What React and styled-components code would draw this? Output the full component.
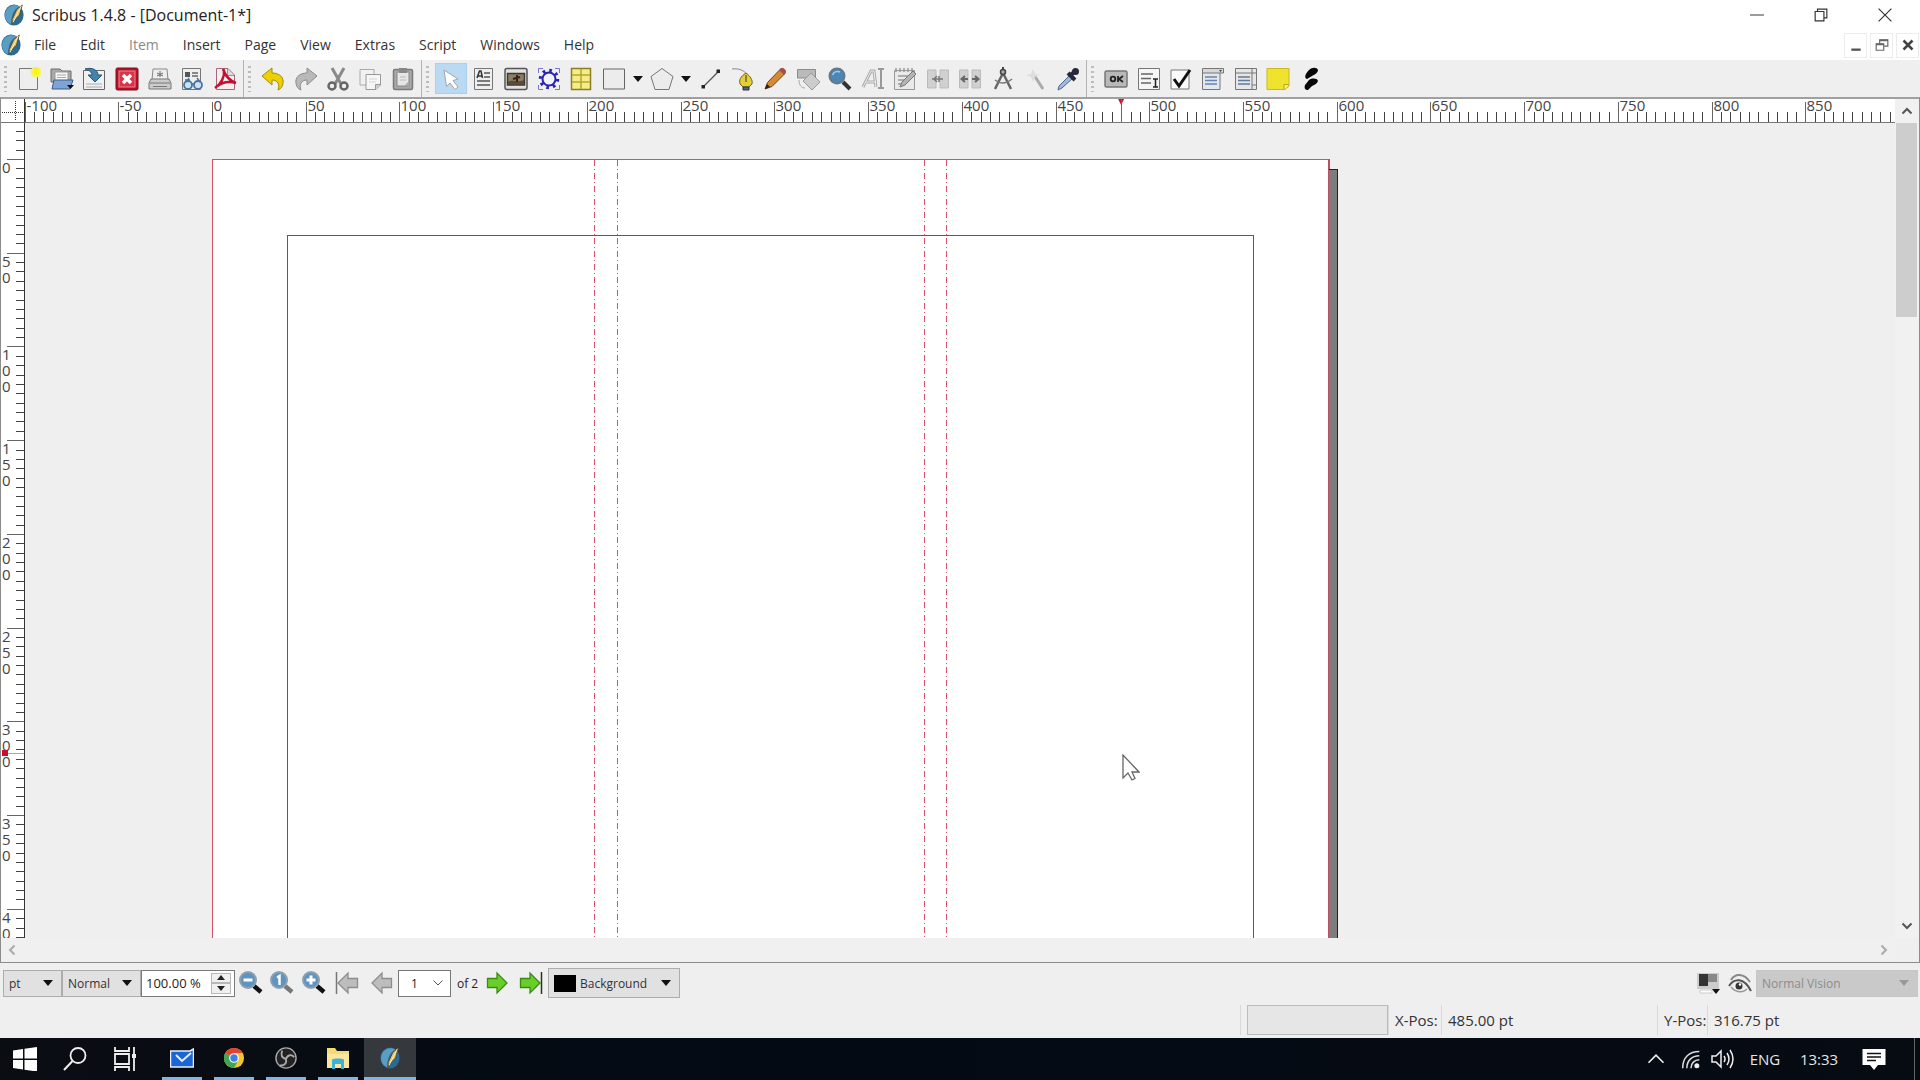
import React, { useState } from 'react';
import styled, { createGlobalStyle, css } from 'styled-components';

const GlobalStyle = createGlobalStyle`
  * {
    box-sizing: border-box;
  }

  body {
    margin: 0;
    overflow: hidden;
    background: #efefef;
    color: #222;
    font-family: 'Open Sans', 'Noto Sans', sans-serif;
    font-size: 14px;
  }

  button,
  input,
  select {
    margin: 0;
    padding: 0;
    border: 0;
    background: none;
    color: inherit;
    font: inherit;
  }
`;

const PX_PER_PT = 1.8745;
const H_ORIGIN = 187;
const V_ORIGIN = 36;
const CURSOR = { x: 485, y: 316.75 };

/* ---------- window chrome ---------- */

const Window = styled.div`
  display: flex;
  flex-direction: column;
  height: 100vh;
`;

const TitleBar = styled.header`
  display: flex;
  align-items: center;
  flex: none;
  height: 30px;
  padding-left: 3px;
  background: #fff;
`;

const Title = styled.h1`
  flex: 1;
  margin: 0 0 0 7px;
  font-size: 16px;
  font-weight: 400;
  line-height: 20px;
`;

const WindowButton = styled.button`
  display: grid;
  place-items: center;
  width: 64px;
  height: 28px;
`;

const WindowButtons = styled.div`
  display: flex;
  padding-right: 3px;
`;

const MenuBar = styled.nav`
  display: flex;
  align-items: center;
  flex: none;
  height: 30px;
  background: #fff;
`;

const MenuItem = styled.button`
  height: 30px;
  padding: 0 12px;
  color: ${props => (props.disabled ? '#8a8a8a' : '#333')};
  line-height: 20px;
`;

const MdiButtons = styled.div`
  display: flex;
  gap: 3px;
  margin-left: auto;
  padding-right: 1px;
`;

const MdiButton = styled.button`
  display: grid;
  place-items: center;
  width: 23px;
  height: 25px;
  border: 1px solid #ececec;
`;

/* ---------- main toolbar ---------- */

const Toolbar = styled.div`
  display: flex;
  flex: none;
  height: 37px;
  background: #efefef;
`;

const ToolSection = styled.div`
  display: flex;
  align-items: center;
  padding: 0 2px 0 4px;
  border-right: ${props => (props.$last ? '0' : '1px solid #b4b4b4')};
`;

const Handle = styled.span`
  flex: none;
  width: 4px;
  height: 26px;
  margin-right: 5px;
  background: repeating-linear-gradient(#bcbcbc 0 2px, transparent 2px 5px);
  background-size: 3px 100%;
  background-repeat: no-repeat;
`;

const ToolGroup = styled.div`
  display: flex;
  width: ${props => props.$width}px;
`;

const ToolButton = styled.button`
  display: grid;
  flex: 1;
  place-items: center;
  height: 31px;
  ${props => props.$active && css`
    background: #b9daf2;
    box-shadow: inset 0 0 0 1px #a8d0ee;
  `}
`;

const ArrowButton = styled.button`
  display: grid;
  place-items: center;
  width: 16px;
  height: 31px;
`;

/* ---------- workspace ---------- */

const Workspace = styled.main`
  display: grid;
  grid-template-columns: 24px minmax(0, 1fr) 24px;
  grid-template-rows: 24px minmax(0, 1fr) 24px;
  flex: 1;
  min-height: 0;
  border: 1px solid #8c8c8c;
  border-top: 2px solid #a0a0a0;
`;

const RulerCorner = styled.div`
  display: grid;
  place-items: center;
  border-right: 1px solid #333;
  border-bottom: 1px solid #777;
  background: #fff;
`;

const HRuler = styled.svg`
  display: block;
  width: 100%;
  height: 24px;
  border-bottom: 1px solid #777;
  background: #fff;
`;

const VRuler = styled.svg`
  display: block;
  width: 24px;
  height: 100%;
  border-right: 1px solid #333;
  background: #fff;
`;

const RulerText = styled.text`
  fill: #444;
  font-size: 15px;
`;

const Canvas = styled.div`
  overflow: hidden;
  padding: 36px 0 0 187px;
  background: #efefef;
`;

const Sheet = styled.div`
  position: relative;
  width: 1118px;
  height: 1580px;
  padding: 75px 74px;
  border: 1px solid #d4526b;
  border-right: 2px solid #b8505f;
  background: #fff;

  &::after {
    content: '';
    position: absolute;
    top: 9px;
    right: -10px;
    width: 8px;
    height: 100%;
    border: 1px solid #222;
    border-left: 0;
    background: #7d7d7d;
  }
`;

const Margins = styled.div`
  height: 100%;
  border: 1px solid #5a4bb8;
`;

const Guide = styled.span`
  position: absolute;
  top: 0;
  bottom: 0;
  width: 1px;
  background: repeating-linear-gradient(
    #d4526b 0 6px,
    transparent 6px 9px,
    #d4526b 9px 10px,
    transparent 10px 13px
  );
`;

const Pointer = styled.svg`
  position: absolute;
  width: 18px;
  height: 28px;
`;

const VScroll = styled.div`
  display: flex;
  flex-direction: column;
  align-items: center;
  grid-row: 1 / 3;
  grid-column: 3;
  padding: 0 2px 0 1px;
  background: #f1f1f1;
`;

const ScrollButton = styled.button`
  display: grid;
  flex: none;
  place-items: center;
  width: 22px;
  height: 24px;
`;

const Track = styled.div`
  flex: 1;
  width: 100%;
`;

const Thumb = styled.div`
  height: 24.5%;
  background: #cdcdcd;
`;

const HScroll = styled.div`
  display: flex;
  justify-content: space-between;
  grid-column: 1 / 3;
  background: #f0f0f0;
`;

/* ---------- bottom bars ---------- */

const ViewBar = styled.div`
  display: flex;
  align-items: center;
  flex: none;
  height: 41px;
  padding: 0 2px 1px 3px;
  font-size: 12px;
`;

const Picker = styled.label`
  position: relative;
  display: flex;
  align-items: center;
  gap: 4px;
  width: ${props => props.$width}px;
  height: ${props => (props.$tall ? 30 : 27)}px;
  padding-left: 5px;
  border: 1px solid #adadad;
  background: #e1e1e1;
  color: #333;
  ${props => props.$off && css`
    border-color: #c6c6c6;
    background: #c9c9c9;
    color: #8c8c8c;
  `}

  &::after {
    content: '';
    position: absolute;
    right: 8px;
    border: 5px solid transparent;
    border-top: 6px solid ${props => (props.$off ? '#999' : '#111')};
    border-bottom: 0;
    pointer-events: none;
  }

  select {
    flex: 1;
    width: 0;
    height: 100%;
    opacity: 1;
    appearance: none;
    outline: 0;
  }
`;

const Swatch = styled.span`
  width: 22px;
  height: 17px;
  background: #000;
`;

const Spin = styled.div`
  display: flex;
  width: 94px;
  height: 27px;
  padding: 2px 3px 2px 4px;
  border: 1px solid #7a7a7a;
  background: #fff;
  font-size: 13px;

  input {
    flex: 1;
    width: 0;
    outline: 0;
  }
`;

const SpinSteps = styled.div`
  display: flex;
  flex-direction: column;
  width: 20px;

  button {
    display: grid;
    flex: 1;
    place-items: center;
    border: 1px solid #b8b8b8;
    background: #f0f0f0;
  }
`;

const IconRow = styled.div`
  display: flex;
  justify-content: space-around;
  width: ${props => props.$width}px;
`;

const IconButton = styled.button`
  display: grid;
  place-items: center;
  width: 26px;
  height: 27px;
`;

const PagePicker = styled.label`
  display: flex;
  align-items: center;
  width: 53px;
  height: 27px;
  padding: 0 6px 0 12px;
  border: 1px solid #777;
  background: #fff;

  select {
    flex: 1;
    width: 0;
    height: 100%;
    appearance: none;
    outline: 0;
  }
`;

const PageCount = styled.span`
  width: 30px;
  padding-left: 6px;
  white-space: nowrap;
`;

const Spacer = styled.div`
  flex: 1;
`;

const StatusBar = styled.footer`
  display: flex;
  justify-content: flex-end;
  flex: none;
  height: 34px;
  padding: 1px 2px 3px;
  color: #333;
  font-size: 15px;
  line-height: 30px;
`;

const StatusCell = styled.div`
  width: ${props => props.$width}px;
  padding-left: 6px;
  border-left: 1px solid #d9d9d9;
  white-space: nowrap;
`;

const Progress = styled.div`
  width: 141px;
  height: 30px;
  border: 1px solid #bcbcbc;
  background: #e6e6e6;
`;

/* ---------- taskbar ---------- */

const Taskbar = styled.div`
  display: flex;
  flex: none;
  height: 42px;
  background: linear-gradient(90deg, #0a0d12, #030a14 40%, #070b12);
  color: #e6e6e6;
  font-size: 15px;
`;

const SystemButtons = styled.div`
  display: flex;
  padding-right: 6px;
`;

const SystemButton = styled.button`
  display: grid;
  place-items: center;
  width: 50px;
`;

const TaskButton = styled.button`
  display: grid;
  place-items: center;
  width: 52px;
  background: ${props => (props.$active ? '#35393d' : 'none')};
  border-bottom: 3px solid #76b9ed;
  ${props => !props.$active && css`
    width: 40px;
    margin: 0 6px;
  `}
`;

const Tray = styled.div`
  display: flex;
  align-items: center;
  margin: 0 12px 0 auto;
`;

const TrayButton = styled.button`
  display: grid;
  place-items: center;
  width: ${props => props.$width}px;
  height: 42px;
`;

const ShowDesktop = styled.button`
  width: 6px;
  height: 42px;
  border-left: 1px solid #666;
`;

/* ---------- icons ---------- */

const Svg = ({ size = 24, children, ...rest }) => (
  <svg width={size} height={size} viewBox="0 0 24 24" fill="none" aria-hidden="true" {...rest}>
    {children}
  </svg>
);

const ScribusLogo = ({ size = 22 }) => (
  <Svg size={size}>
    <ellipse cx="12" cy="12" rx="10.5" ry="11.5" fill="#2b6a93" />
    <path d="M3 8C6 1 14 0 18 3 12 5 9 12 9 22 3 20 1 14 3 8Z" fill="#5b9ec4" />
    <path d="M21 1 15 6 10 17 10 22 12 18 18 12Z" fill="#e3c46a" stroke="#4f4a35" />
    <path d="M20 2 11 20" stroke="#faf0cc" />
  </Svg>
);

const Down = () => (
  <svg width="10" height="6" aria-hidden="true">
    <path d="M0 0H10L5 6Z" fill="#111" />
  </svg>
);

const page = <path d="M2.500 1.500H20.500V22.500H2.500Z" fill="#eee" stroke="#777" />;

const icons = {
  'New': (
    <>
      {page}
      <circle cx="19" cy="5" r="5.500" fill="#f6f35a" opacity=".9" />
      <circle cx="19" cy="5" r="3" fill="#fbf700" />
    </>
  ),
  'Open': (
    <>
      <path d="M1 2H10L12 4H21V15H1Z" fill="#a9a9a9" stroke="#6d6d6d" />
      <path d="M5 5H18V14H5Z" fill="#f5f5f5" stroke="#999" />
      <path d="M7 8H16M7 10.500H16" stroke="#aaa" />
      <path d="M4 13H23L20 22H2Z" fill="#7fa4d3" stroke="#365e92" />
      <path d="M17 18H24L20.500 22Z" fill="#111" />
    </>
  ),
  'Save': (
    <>
      <path d="M1.500 3.500H22.500V22.500H1.500Z" fill="#f1f1f1" stroke="#666" />
      <path d="M4 17H20M4 20H20" stroke="#aaa" />
      <path d="M3 2C10 0 16 3 16 8H20L13 15 6 8H10C10 5 7 3 3 2Z" fill="#4583ad" stroke="#235779" />
    </>
  ),
  'Close': (
    <>
      <rect x="1" y="1" width="22" height="22" rx="1.500" fill="#b50f27" stroke="#7d1020" />
      <rect x="4" y="4" width="16" height="16" fill="#de3246" stroke="#e98b95" />
      <path d="m8 8 8 8m0-8-8 8" stroke="#fff" strokeWidth="3.500" />
    </>
  ),
  'Print': (
    <>
      <path d="M5 2H19L20 13H4Z" fill="#eee" stroke="#888" />
      <path d="M12 4V10M9 6l6 3m0-3-6 3" stroke="#666" />
      <path d="M3 12H21L23 16V22H1V16Z" fill="#ccc" stroke="#777" />
      <path d="M2 16H22M5 19.500H19" stroke="#777" />
    </>
  ),
  'Preflight': (
    <>
      {page}
      <path d="M5 5H10V10H5Z" fill="#555" />
      <path d="M12 6H18M12 9H18M5 13H10" stroke="#666" strokeWidth="1.500" />
      <circle cx="8" cy="18" r="4" fill="#cfe0ef" stroke="#4675a5" strokeWidth="1.800" />
      <circle cx="18" cy="18" r="4" fill="#cfe0ef" stroke="#4675a5" strokeWidth="1.800" />
      <path d="m6 15 3-4M20 15l-3-4M12 17h2" stroke="#4675a5" strokeWidth="1.500" />
    </>
  ),
  'Export as PDF': (
    <>
      <path d="M3.500 1.500H15L21.500 8V22.500H3.500Z" fill="#f5edee" stroke="#a8657a" />
      <path d="M14.500 2V8.500H21" fill="#ddd" stroke="#b08a92" />
      <path d="M10 2C12 8 15 13 23 16M11 3C12 10 8 17 2 21M3 20C9 15 16 14 23 16" stroke="#c01130" strokeWidth="2.500" />
    </>
  ),
  'Undo': <path d="M1 9 11 1V6C19 6 23 11 22 16 22 19 20 22 17 23 19 18 17 13 11 13V18Z" fill="#ecd000" stroke="#a08c10" />,
  'Redo': <path d="M23 9 13 1V6C5 6 1 11 2 16 2 19 4 22 7 23 5 18 7 13 13 13V18Z" fill="#b9b9b9" stroke="#8c8c8c" />,
  'Cut': (
    <>
      <path d="M6 1 15 17M18 1 9 17" stroke="#8a8a8a" strokeWidth="3" />
      <circle cx="6" cy="19" r="3.500" stroke="#666" strokeWidth="2.500" />
      <circle cx="18" cy="19" r="3.500" stroke="#666" strokeWidth="2.500" />
    </>
  ),
  'Copy': (
    <>
      <path d="M2 2.500H16V18H2Z" fill="#f1f1f1" stroke="#aaa" />
      <path d="M8 7.500H22.500V18L18 22.500H8Z" fill="#f6f6f6" stroke="#999" />
      <path d="M22 17.500H17.500V22" fill="#ccc" stroke="#999" />
      <path d="M11 12H19M11 15H18" stroke="#d6d6d6" />
    </>
  ),
  'Paste': (
    <>
      <rect x="2.500" y="2.500" width="19" height="20" rx="1.500" fill="#a8a8a8" stroke="#7a7a7a" strokeWidth="1.500" />
      <path d="M6 5H18V19H6Z" fill="#e6e6e6" stroke="#888" />
      <path d="M8 1H16V6H8Z" fill="#888" />
      <path d="M9 10H15M9 13H15" stroke="#bbb" />
      <path d="m13 19 5-5v5Z" fill="#aaa" />
    </>
  ),
  'Select Item': <path d="M5 3 19 12 14 13.500 19 20 16 22.500 11 16 7.500 19.500Z" fill="#fff" stroke="#a4a4ac" />,
  'Insert Text Frame': (
    <>
      {page}
      <path d="M5 11 7.500 4H9l1.500 7M6 9h4" stroke="#333" strokeWidth="1.500" />
      <path d="M12 6H18M12 10H18M5 14H18M5 18H18" stroke="#555" strokeWidth="1.500" />
    </>
  ),
  'Insert Image Frame': (
    <>
      <rect x="1" y="1.500" width="22" height="21" rx="2" fill="#e2e2e2" stroke="#555" strokeWidth="1.500" />
      <path d="M3.500 6.500H20.500V18H3.500Z" fill="#8c7d63" stroke="#3d3931" strokeWidth="1.500" />
      <path d="M4 15C8 12 14 16 20 13V17.500H4Z" fill="#594b3a" />
      <path d="M13 8V15M9 12 16 10" stroke="#382218" strokeWidth="2" />
    </>
  ),
  'Insert Render Frame': (
    <>
      <path d="M1.500 6V1.500H6M18 1.500H22.500V6M22.500 18V22.500H18M6 22.500H1.500V18" stroke="#7a75cc" />
      <circle cx="12" cy="12" r="8.500" stroke="#2a22b4" strokeWidth="3.500" strokeDasharray="2.600 4.075" />
      <circle cx="12" cy="12" r="6.500" fill="#f3f3fc" stroke="#2a22b4" strokeWidth="2" />
    </>
  ),
  'Insert Table': (
    <>
      <path d="M2.500 1.500H21.500V22.500H2.500Z" fill="#f5ee86" stroke="#8d7d28" strokeWidth="1.500" />
      <path d="M12 2V22M3 8H21M3 15H21" stroke="#b6a534" strokeWidth="1.500" />
    </>
  ),
  'Insert Shape': <path d="M1.500 2H22.500V22H1.500Z" fill="#ececec" stroke="#666" />,
  'Insert Polygon': <path d="M12 1.500 23 9.500 19 22.500H5L1 9.500Z" fill="#ececec" stroke="#777" />,
  'Insert Line': (
    <>
      <path d="M4 20 20 4" stroke="#555" strokeWidth="1.300" />
      <path d="M2.500 18H6V21.500H2.500ZM17.500 2.500H21V6H17.500Z" fill="#222" />
    </>
  ),
  'Insert Bezier Curve': (
    <>
      <path d="M1 2C9 1 15 4 17 10" stroke="#888" />
      <path d="M15 6C9 10 8 13 9 17L12 20H18L21 17C22 13 19 9 15 6Z" fill="#e5cf37" stroke="#6b6120" />
      <path d="M15 8V15M12 20H18V23H12Z" fill="#4b6694" stroke="#333" />
    </>
  ),
  'Insert Freehand Line': (
    <>
      <path d="M2 22 4.500 15.500 17 2.500C20 0 24 4 21.500 7L9 19.500Z" fill="#d58a36" stroke="#6d4520" />
      <path d="m16 3 5 5 1.500-2C24 3 20 0 17.500 1.500Z" fill="#a85048" />
      <path d="m2 22 2-5 3 3Z" fill="#222" />
    </>
  ),
  'Rotate Item': (
    <>
      <path d="M1.500 2.500H19.500V11H1.500Z" fill="#bababa" stroke="#8b8b8b" />
      <path d="M15 6 24 15 16 23 7 14Z" fill="#ccc" stroke="#999" />
      <path d="M3 13C3 19 6 21 9 21" stroke="#aaa" />
    </>
  ),
  'Zoom': (
    <>
      <path d="m15 15 7 7" stroke="#333" strokeWidth="4" />
      <circle cx="9" cy="9" r="7.500" fill="#4a87b8" stroke="#6b7782" strokeWidth="2" />
      <path d="M4.500 8C6 4 10 4 12 5" stroke="#a8cbe6" strokeWidth="1.500" />
    </>
  ),
  'Edit Contents of Frame': (
    <>
      <path d="m2 20 8-16h3l2 16M5 15h9" stroke="#aaa" strokeWidth="3" />
      <path d="m2 20 8-16h3l2 16M5 15h9" stroke="#eee" />
      <path d="M17 2H23M20 2V21M17 21H23" stroke="#999" strokeWidth="2" />
    </>
  ),
  'Edit Text': (
    <>
      <path d="M1.500 3.500H21.500V22.500H1.500Z" fill="#e9e9e9" stroke="#999" />
      <path d="M3 1V5M7 1V5M11 1V5M15 1V5M19 1V5M5 9H15M5 13H12M5 17H9" stroke="#999" strokeWidth="1.500" />
      <path d="m7 20 2-5L20 4l3 3L12 18Z" fill="#b4b4b4" stroke="#777" />
    </>
  ),
  'Link Text Frames': (
    <>
      <path d="M1.500 3H10V21H1.500ZM14 3H22.500V21H14Z" fill="#d0d0d0" stroke="#bbb" />
      <path d="M6 12H17M11 9l-3 3 3 3M13 9V15" stroke="#777" strokeWidth="1.500" />
    </>
  ),
  'Unlink Text Frames': (
    <>
      <path d="M1.500 3H10V21H1.500ZM14 3H22.500V21H14Z" fill="#d0d0d0" stroke="#bbb" />
      <path d="M3 12H10M14 12H21M7 9l-3.500 3 3.500 3M17 9l3.500 3-3.500 3" stroke="#666" strokeWidth="2" />
    </>
  ),
  'Measurements': (
    <>
      <path d="M12 6 4 22M12 6 20 22" stroke="#666" strokeWidth="2.500" />
      <path d="M4 13C9 17 15 17 21 12" stroke="#777" strokeWidth="1.500" />
      <circle cx="12" cy="5" r="2.500" fill="#aaa" stroke="#444" strokeWidth="1.500" />
      <path d="M12 0V3" stroke="#444" strokeWidth="2" />
    </>
  ),
  'Copy Item Properties': (
    <>
      <path d="m11 8 9 14" stroke="#aaa" strokeWidth="3" />
      <path d="M10 2 12 7 17 8 12 10 10 15 8 10 3 8 8 7Z" fill="#ddd" />
    </>
  ),
  'Eye Dropper': (
    <>
      <path d="m14 8 3 3L6 21 2 23 3 19Z" fill="#9fb9dc" stroke="#50698c" />
      <path d="m12 6 7 7M15 8l5-5" stroke="#272a38" strokeWidth="4" />
      <circle cx="19.500" cy="4.500" r="3.500" fill="#272a38" />
    </>
  ),
  'Insert PDF Push Button': (
    <>
      <rect x="1" y="4" width="22" height="16" rx="1.500" fill="#b8b8b8" stroke="#777" strokeWidth="1.500" />
      <circle cx="9" cy="12" r="2.300" stroke="#222" strokeWidth="1.800" />
      <path d="M14 9V15M19 9l-4 3 4 3" stroke="#222" strokeWidth="1.800" />
    </>
  ),
  'Insert PDF Text Field': (
    <>
      <path d="M1.500 1.500H22.500V22.500H1.500Z" fill="#f5f5f5" stroke="#777" />
      <path d="M4 7H16M4 11.500H14M4 16H14" stroke="#666" strokeWidth="1.500" />
      <path d="M16 12H21M18.500 12V20M16 20H21" stroke="#222" strokeWidth="1.500" />
    </>
  ),
  'Insert PDF Check Box': (
    <>
      <path d="M2 3H20V22H2Z" fill="#fafafa" stroke="#777" />
      <path d="M5 12 10 19 21 3" stroke="#111" strokeWidth="3" />
    </>
  ),
  'Insert PDF Combo Box': (
    <>
      <path d="M1.500 4.500H19V22.500H1.500Z" fill="#e2e7ee" stroke="#777" />
      <path d="M1.500 1.500H22.500V6H1.500Z" fill="#d7d7d7" stroke="#777" />
      <path d="M4 10H16M4 13.500H16M4 17H16" stroke="#6684ad" strokeWidth="1.700" />
      <path d="m18 3 3 0-1.500 2Z" fill="#444" />
    </>
  ),
  'Insert PDF List Box': (
    <>
      <path d="M1.500 1.500H22.500V22.500H1.500Z" fill="#e6e6e6" stroke="#777" />
      <path d="M18 2V22M18 6H22M18 18H22M2 6H18" stroke="#777" />
      <path d="M4 10H16M4 13.500H16M4 17H16" stroke="#60799c" strokeWidth="1.700" />
    </>
  ),
  'Insert Text Annotation': (
    <>
      <path d="M1 1.500H23V19L19 22.500H1Z" fill="#efe32d" stroke="#c8b91c" />
      <path d="M23 17.500H18V22.500" fill="#f7f08a" stroke="#b3a41c" />
    </>
  ),
  'Insert Link Annotation': (
    <>
      <path d="M10 3C13 0 18 0 19 3 19 6 15 8 13 9L8 12C5 11 6 7 10 3Z" fill="#080808" />
      <path d="M10 13C13 11 18 11 19 14 18 17 15 18 13 19L9 23C6 23 5 21 6 18Z" fill="#080808" />
    </>
  ),
};

const TOOL_SECTIONS = [
  { width: 228, tools: ['New', 'Open', 'Save', 'Close', 'Print', 'Preflight', 'Export as PDF'] },
  { width: 162, tools: ['Undo', 'Redo', 'Cut', 'Copy', 'Paste'] },
  {
    width: 649,
    tools: [
      'Select Item', 'Insert Text Frame', 'Insert Image Frame', 'Insert Render Frame',
      'Insert Table', 'Insert Shape', 'Insert Polygon', 'Insert Line', 'Insert Bezier Curve',
      'Insert Freehand Line', 'Rotate Item', 'Zoom', 'Edit Contents of Frame', 'Edit Text',
      'Link Text Frames', 'Unlink Text Frames', 'Measurements', 'Copy Item Properties',
      'Eye Dropper',
    ],
  },
  {
    width: 227,
    tools: [
      'Insert PDF Push Button', 'Insert PDF Text Field', 'Insert PDF Check Box',
      'Insert PDF Combo Box', 'Insert PDF List Box', 'Insert Text Annotation',
      'Insert Link Annotation',
    ],
  },
];

const WITH_MENU = ['Insert Shape', 'Insert Polygon'];

const MENUS = ['File', 'Edit', 'Item', 'Insert', 'Page', 'View', 'Extras', 'Script', 'Windows', 'Help'];

const Magnifier = ({ handle = '#111', children }) => (
  <Svg>
    <path d="m15 15 7 6" stroke={handle} strokeWidth="4.500" />
    <circle cx="9" cy="9" r="8" fill="#5f93c2" stroke="#8fa0ad" strokeWidth="2" />
    {children}
  </Svg>
);

const PageArrow = ({ back, end, colors }) => (
  <Svg transform={back ? 'scale(-1 1)' : undefined}>
    <path d="M1.500 7.500H11V2L21 12 11 22V16.500H1.500Z" fill={colors[0]} stroke={colors[1]} strokeWidth="1.300" />
    {end && <path d="M22.500 1V23" stroke={colors[2]} strokeWidth="1.500" />}
  </Svg>
);

const GREY = ['#bdbdbd', '#8d8d8d', '#777'];
const GREEN = ['#68cf28', '#3c8a16', '#1d3a10'];

const Chevron = ({ d, color = '#555', width = 2 }) => (
  <Svg size={12}>
    <path d={d} stroke={color} strokeWidth={width * 2} />
  </Svg>
);

/* ---------- rulers ---------- */

const range = (from, to) => {
  const list = [];
  for (let pt = from; pt <= to; pt += 5) list.push(pt);
  return list;
};

const HorizontalRuler = () => (
  <HRuler>
    {range(-95, 895).concat(-100).map((pt) => {
      const x = Math.round(H_ORIGIN + pt * PX_PER_PT) + 0.5;
      const major = pt % 50 === 0;
      return (
        <g key={pt}>
          <path d={`M${x} ${major ? 3 : 13}V23`} stroke={major ? '#666' : '#444'} />
          {major && <RulerText x={x + 1} y="12">{pt}</RulerText>}
        </g>
      );
    })}
    <path
      d={`M${H_ORIGIN + CURSOR.x * PX_PER_PT - 3} 0h6l-3 6Z`}
      fill="#c8102e"
    />
    <path d={`M${Math.round(H_ORIGIN + CURSOR.x * PX_PER_PT) + 0.5} 0V23`} stroke="#d9304c" />
  </HRuler>
);

const VerticalRuler = () => (
  <VRuler>
    {range(-15, 600).map((pt) => {
      const y = Math.round(V_ORIGIN + pt * PX_PER_PT) + 0.5;
      const major = pt % 50 === 0;
      return (
        <g key={pt}>
          <path d={`M${major ? 6 : 15} ${y}H23`} stroke={major ? '#666' : '#444'} />
          {major && String(pt).split('').map((digit, i) => (
            <RulerText key={i} x="1" y={y + 13 + i * 16}>{digit}</RulerText>
          ))}
        </g>
      );
    })}
    <path d={`M5 ${Math.round(V_ORIGIN + CURSOR.y * PX_PER_PT) + 0.5}H23`} stroke="#ef8a9c" />
    <rect x="1" y={Math.round(V_ORIGIN + CURSOR.y * PX_PER_PT) - 3} width="6" height="6" fill="#c8102e" />
  </VRuler>
);

/* ---------- app ---------- */

const App = () => {
  const [tool, setTool] = useState('Select Item');
  const [zoom, setZoom] = useState('100.00 %');

  return (
    <Window>
      <GlobalStyle />
      <TitleBar>
        <ScribusLogo />
        <Title>Scribus 1.4.8 - [Document-1*]</Title>
        <WindowButtons>
          <WindowButton aria-label="Minimize">
            <Svg size={14}><path d="M0 12H24" stroke="#555" strokeWidth="2" /></Svg>
          </WindowButton>
          <WindowButton aria-label="Restore">
            <Svg size={14}><path d="M2 6H17V22H2ZM6 6V2H22V17H17" stroke="#333" strokeWidth="2" /></Svg>
          </WindowButton>
          <WindowButton aria-label="Close">
            <Svg size={14}><path d="M1 1 23 23M23 1 1 23" stroke="#333" strokeWidth="2" /></Svg>
          </WindowButton>
        </WindowButtons>
      </TitleBar>

      <MenuBar>
        <ScribusLogo />
        {MENUS.map(name => (
          <MenuItem key={name} disabled={name === 'Item'}>{name}</MenuItem>
        ))}
        <MdiButtons>
          <MdiButton aria-label="Minimize document">
            <Svg size={14}><path d="M4 20H20" stroke="#555" strokeWidth="4" /></Svg>
          </MdiButton>
          <MdiButton aria-label="Restore document">
            <Svg size={14}>
              <path d="M2 10H15V21H2ZM8 9V3H22V14H16" stroke="#666" strokeWidth="2" />
              <path d="M2 11H15M8 4H22" stroke="#666" strokeWidth="3" />
            </Svg>
          </MdiButton>
          <MdiButton aria-label="Close document">
            <Svg size={12}><path d="M3 3 21 21M21 3 3 21" stroke="#444" strokeWidth="5" /></Svg>
          </MdiButton>
        </MdiButtons>
      </MenuBar>

      <Toolbar>
        {TOOL_SECTIONS.map((section, i) => (
          <ToolSection key={section.width} $last={i === TOOL_SECTIONS.length - 1}>
            <Handle />
            <ToolGroup $width={section.width}>
              {section.tools.map(name => (
                <React.Fragment key={name}>
                  <ToolButton aria-label={name} $active={tool === name} onClick={() => setTool(name)}>
                    <Svg>{icons[name]}</Svg>
                  </ToolButton>
                  {WITH_MENU.includes(name) && (
                    <ArrowButton aria-label={`${name} options`}><Down /></ArrowButton>
                  )}
                </React.Fragment>
              ))}
            </ToolGroup>
          </ToolSection>
        ))}
      </Toolbar>

      <Workspace>
        <RulerCorner>
          <svg width="23" height="23" aria-hidden="true">
            <path d="M1 13.500H23M14.500 2V22" stroke="#333" strokeDasharray="1 1" />
          </svg>
        </RulerCorner>
        <HorizontalRuler />
        <VScroll>
          <ScrollButton aria-label="Scroll up"><Chevron d="M3 17 12 8 21 17" /></ScrollButton>
          <Track><Thumb /></Track>
          <ScrollButton aria-label="Scroll down"><Chevron d="M3 7 12 16 21 7" /></ScrollButton>
        </VScroll>
        <VerticalRuler />
        <Canvas>
          <Sheet>
            <Margins />
            <Guide style={{ left: 381 }} />
            <Guide style={{ left: 404 }} />
            <Guide style={{ left: 711 }} />
            <Guide style={{ left: 733 }} />
            <Pointer viewBox="0 0 18 28" style={{ left: 909, top: 594 }}>
              <path
                d="M1 1V24L6 19 10 26 13 24.500 10 18H17Z"
                fill="#fff"
                stroke="#666"
                strokeWidth="1.300"
              />
            </Pointer>
          </Sheet>
        </Canvas>
        <HScroll>
          <ScrollButton aria-label="Scroll left"><Chevron d="M17 3 8 12 17 21" color="#aaa" /></ScrollButton>
          <ScrollButton aria-label="Scroll right"><Chevron d="M7 3 16 12 7 21" color="#aaa" /></ScrollButton>
        </HScroll>
      </Workspace>

      <ViewBar>
        <Picker $width={59}>
          <select aria-label="Unit"><option>pt</option></select>
        </Picker>
        <Picker $width={79}>
          <select aria-label="Preview quality"><option>Normal</option></select>
        </Picker>
        <Spin>
          <input aria-label="Zoom level" value={zoom} onChange={e => setZoom(e.target.value)} />
          <SpinSteps>
            <button aria-label="Increase zoom">
              <svg width="8" height="5"><path d="M0 5H8L4 0Z" fill="#222" /></svg>
            </button>
            <button aria-label="Decrease zoom">
              <svg width="8" height="5"><path d="M0 0H8L4 5Z" fill="#222" /></svg>
            </button>
          </SpinSteps>
        </Spin>
        <IconRow $width={95}>
          <IconButton aria-label="Zoom out">
            <Magnifier><path d="M4.500 9H13.500" stroke="#fff" strokeWidth="3" /></Magnifier>
          </IconButton>
          <IconButton aria-label="Zoom to 100%">
            <Magnifier handle="#777"><path d="M7 6.500 9.500 5V14" stroke="#fff" strokeWidth="2.500" /></Magnifier>
          </IconButton>
          <IconButton aria-label="Zoom in">
            <Magnifier><path d="M4.500 9H13.500M9 4.500V13.500" stroke="#fff" strokeWidth="3" /></Magnifier>
          </IconButton>
        </IconRow>
        <IconRow $width={68}>
          <IconButton aria-label="First page"><PageArrow back end colors={GREY} /></IconButton>
          <IconButton aria-label="Previous page"><PageArrow back colors={GREY} /></IconButton>
        </IconRow>
        <PagePicker>
          <select aria-label="Page" defaultValue="1">
            <option>1</option>
            <option>2</option>
          </select>
          <Chevron d="M3 7 12 16 21 7" width={1} />
        </PagePicker>
        <PageCount>of 2</PageCount>
        <IconRow $width={67}>
          <IconButton aria-label="Next page"><PageArrow colors={GREEN} /></IconButton>
          <IconButton aria-label="Last page"><PageArrow end colors={GREEN} /></IconButton>
        </IconRow>
        <Picker $width={132} $tall>
          <Swatch />
          <select aria-label="Layer"><option>Background</option></select>
        </Picker>
        <Spacer />
        <IconRow $width={64}>
          <IconButton aria-label="Color management">
            <Svg>
              <path d="M1 2H23V18H1Z" fill="#ccc" />
              <path d="M3 3H12V15H3Z" fill="#333" />
              <path d="M12 3H21V11H12Z" fill="#888" />
              <path d="M4 19H16V22H4Z" fill="#fff" stroke="#ccc" />
              <path d="M16 18H24L20 23Z" fill="#111" />
            </Svg>
          </IconButton>
          <IconButton aria-label="Preview mode">
            <Svg>
              <path d="M3 9C7 2 16 2 22 11" stroke="#888" strokeWidth="2" />
              <path d="M1 15C6 7 16 6 23 20" stroke="#555" strokeWidth="2" />
              <path d="M3 16C8 22 15 22 19 18" stroke="#999" strokeWidth="1.500" />
              <circle cx="11" cy="15" r="3.500" fill="#333" />
              <circle cx="12" cy="13.500" r="1.300" fill="#fff" />
            </Svg>
          </IconButton>
        </IconRow>
        <Picker $width={162} $off>
          <select aria-label="Vision" disabled><option>Normal Vision</option></select>
        </Picker>
      </ViewBar>

      <StatusBar>
        <StatusCell $width={148}><Progress /></StatusCell>
        <StatusCell $width={53}>X-Pos:</StatusCell>
        <StatusCell $width={216}>485.00 pt</StatusCell>
        <StatusCell $width={50}>Y-Pos:</StatusCell>
        <StatusCell $width={211}>316.75 pt</StatusCell>
      </StatusBar>

      <Taskbar>
        <SystemButtons>
          <SystemButton aria-label="Start">
            <Svg>
              <path d="M0 3.500 10 2V11.500H0ZM11.500 1.700 24 0V11.500H11.500ZM0 13H10V22.500L0 21ZM11.500 13H24V24.500L11.500 22.800Z" fill="#fff" />
            </Svg>
          </SystemButton>
          <SystemButton aria-label="Search">
            <Svg>
              <circle cx="15" cy="8.500" r="7.500" stroke="#eee" strokeWidth="1.800" />
              <path d="M9.500 14 1 23" stroke="#eee" strokeWidth="2" />
            </Svg>
          </SystemButton>
          <SystemButton aria-label="Task View">
            <Svg>
              <path d="M2 0V4H16V0M2 24V20H16V24M2 7H16V17H2ZM21 0V24" stroke="#eee" strokeWidth="1.800" />
              <path d="M19 7H23V11H19Z" fill="#eee" />
            </Svg>
          </SystemButton>
        </SystemButtons>
        <TaskButton aria-label="Mail">
          <Svg>
            <path d="M0.500 5H20L23.500 3V21H0.500Z" fill="#1a66d8" stroke="#e8eefc" strokeWidth="1.500" />
            <path d="M6 9 12 15 21 7" stroke="#e8eefc" strokeWidth="2" />
          </Svg>
        </TaskButton>
        <TaskButton aria-label="Chrome">
          <Svg size={22}>
            <circle cx="12" cy="12" r="11" fill="#f5c52c" />
            <path d="M12 12 2.500 6.500A11 11 0 0 1 21.500 6.500H12Z" fill="#e0432f" />
            <path d="M2.500 6.500A11 11 0 0 0 12 23L16.500 14.500 12 12Z" fill="#3fa753" />
            <circle cx="12" cy="12" r="5.300" fill="#fff" />
            <circle cx="12" cy="12" r="4" fill="#3e7fe8" />
          </Svg>
        </TaskButton>
        <TaskButton aria-label="OBS Studio">
          <Svg size={22}>
            <circle cx="12" cy="12" r="11" fill="#222" stroke="#aaa" strokeWidth="1.500" />
            <path d="M12 13C7 12 6 8 8 4M12 13C14 8 18 8 21 11M12 13C13 18 10 21 5 20" stroke="#aaa" strokeWidth="2" />
          </Svg>
        </TaskButton>
        <TaskButton aria-label="File Explorer">
          <Svg>
            <path d="M1 2H9L11 5H23V22H1Z" fill="#f6da78" />
            <path d="M1 8H23V22H1Z" fill="#fbe79b" />
            <path d="M6 23V14C6 12 18 12 18 14V23H15V18H9V23Z" fill="#3eb3d8" />
          </Svg>
        </TaskButton>
        <TaskButton aria-label="Scribus" $active>
          <ScribusLogo />
        </TaskButton>
        <Tray>
          <TrayButton $width={36} aria-label="Show hidden icons">
            <Svg size={18}><path d="M2 17 12 7 22 17" stroke="#eee" strokeWidth="2.200" /></Svg>
          </TrayButton>
          <TrayButton $width={34} aria-label="Network">
            <Svg size={20}>
              <path d="M2 23C2 10 10 3 22 3M7 23C7 14 13 8 22 8M12 23C12 17 16 13 22 13" stroke="#ddd" strokeWidth="1.800" />
              <circle cx="19" cy="20" r="3" fill="#eee" />
            </Svg>
          </TrayButton>
          <TrayButton $width={30} aria-label="Volume">
            <Svg>
              <path d="M1 9H5L10 4V20L5 15H1Z" stroke="#eee" strokeWidth="1.500" />
              <path d="M13 9Q15 12 13 15M16 6Q20 12 16 18M19 3Q25 12 19 21" stroke="#eee" strokeWidth="1.500" />
            </Svg>
          </TrayButton>
          <TrayButton $width={54}>ENG</TrayButton>
          <TrayButton $width={54}>13:33</TrayButton>
          <TrayButton $width={56} aria-label="Notifications">
            <Svg>
              <path d="M0.500 2H23.500V18H16L12 23 8 18H0.500Z" fill="#fff" />
              <path d="M5 6.500H19M5 10H19M5 13.500H14" stroke="#111" strokeWidth="1.500" />
            </Svg>
          </TrayButton>
        </Tray>
        <ShowDesktop aria-label="Show desktop" />
      </Taskbar>
    </Window>
  );
};

export default App;
